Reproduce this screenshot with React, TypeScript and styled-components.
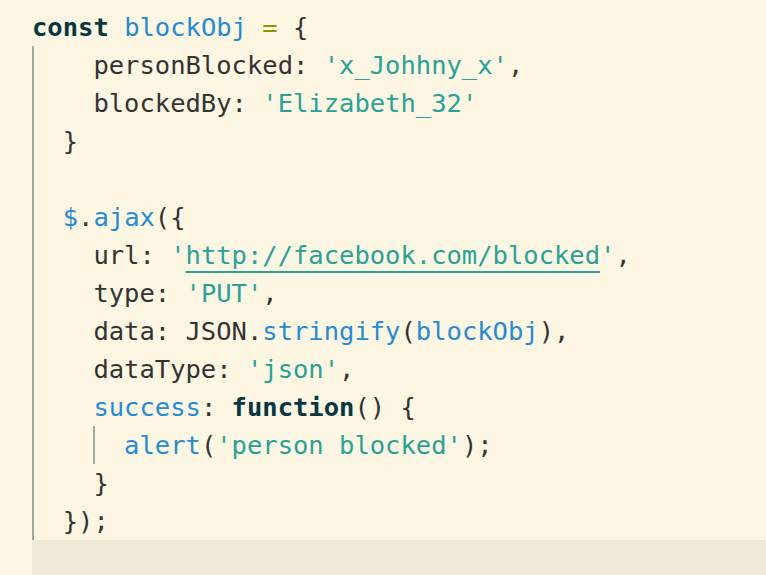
import React from "react";
import styled, { createGlobalStyle } from "styled-components";

const GlobalStyle = createGlobalStyle`
  html, body {
    margin: 0;
    padding: 0;
    background: #fdf6e3;
  }
`;

const Page = styled.div`
  padding: 8px 0 0 32px;
  min-height: 575px;
  box-sizing: border-box;
  display: flex;
  flex-direction: column;
`;

const CodeBlock = styled.pre`
  margin: 0;
  font-family: "DejaVu Sans Mono", "Liberation Mono", monospace;
  font-size: 25.5px;
  color: #333333;
  display: flex;
  flex-direction: column;
`;

const Line = styled.div`
  display: flex;
  height: 38px;
  line-height: 38px;
  white-space: pre;
`;

const Indent = styled.span<{ $guide?: boolean }>`
  flex: 0 0 2ch;
  width: 2ch;
  box-sizing: border-box;
  border-left: 2px solid ${(p) => (p.$guide ? "#a3a89c" : "transparent")};
`;

const Text = styled.span``;

const Keyword = styled.span`
  color: #073642;
  font-weight: bold;
`;

const Name = styled.span`
  color: #268bd2;
`;

const Operator = styled.span`
  color: #859900;
`;

const Str = styled.span`
  color: #2aa198;
`;

const Link = styled.span`
  color: #2aa198;
  text-decoration: underline;
  text-decoration-thickness: 2px;
  text-underline-offset: 7px;
`;

const Footer = styled.div`
  flex: 1;
  background: #eee8d5;
`;

type LineDef = { guides: boolean[]; content: React.ReactNode };

const lines: LineDef[] = [
  {
    guides: [],
    content: (
      <>
        <Keyword>const</Keyword> <Name>blockObj</Name> <Operator>=</Operator> {"{"}
      </>
    ),
  },
  {
    guides: [true, false],
    content: (
      <>
        personBlocked: <Str>'x_Johhny_x'</Str>,
      </>
    ),
  },
  {
    guides: [true, false],
    content: (
      <>
        blockedBy: <Str>'Elizabeth_32'</Str>
      </>
    ),
  },
  { guides: [true], content: <>{"}"}</> },
  { guides: [true], content: <>{""}</> },
  {
    guides: [true],
    content: (
      <>
        <Name>$</Name>.<Name>ajax</Name>({"{"}
      </>
    ),
  },
  {
    guides: [true, false],
    content: (
      <>
        url: <Str>'</Str>
        <Link>http://facebook.com/blocked</Link>
        <Str>'</Str>,
      </>
    ),
  },
  {
    guides: [true, false],
    content: (
      <>
        type: <Str>'PUT'</Str>,
      </>
    ),
  },
  {
    guides: [true, false],
    content: (
      <>
        data: JSON.<Name>stringify</Name>(<Name>blockObj</Name>),
      </>
    ),
  },
  {
    guides: [true, false],
    content: (
      <>
        dataType: <Str>'json'</Str>,
      </>
    ),
  },
  {
    guides: [true, false],
    content: (
      <>
        <Name>success</Name>: <Keyword>function</Keyword>() {"{"}
      </>
    ),
  },
  {
    guides: [true, false, true],
    content: (
      <>
        <Name>alert</Name>(<Str>'person blocked'</Str>);
      </>
    ),
  },
  { guides: [true, false], content: <>{"}"}</> },
  { guides: [true], content: <>{"});"}</> },
];

export default function App() {
  return (
    <>
      <GlobalStyle />
      <Page>
        <CodeBlock>
          {lines.map((l, i) => (
            <Line key={i}>
              {l.guides.map((g, j) => (
                <Indent key={j} $guide={g} />
              ))}
              <Text>{l.content}</Text>
            </Line>
          ))}
        </CodeBlock>
        <Footer />
      </Page>
    </>
  );
}
